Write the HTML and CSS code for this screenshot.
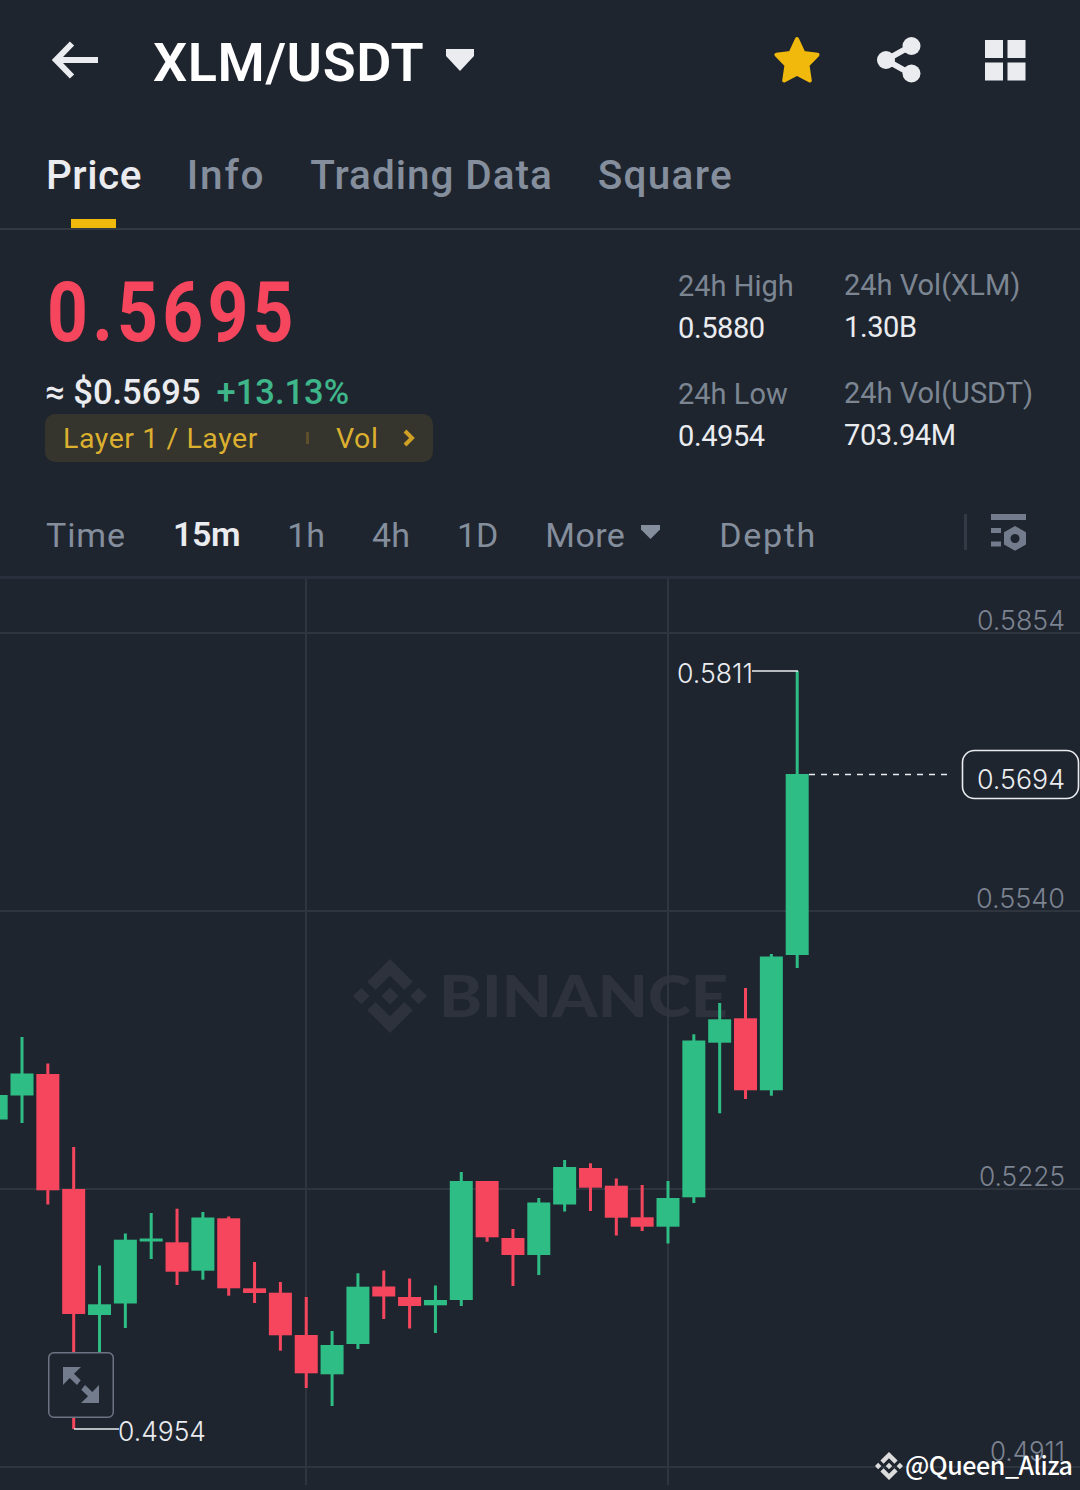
FILE: index.html
```html
<!DOCTYPE html>
<html lang="en">
<head>
    <meta charset="UTF-8">
    <title>XLM/USDT</title>
    <link rel="stylesheet" href="styles.css">
</head>
<body>
    <header class="topbar">
        <svg class="back" width="46" height="38" viewBox="0 0 46 38"><path d="M20 2.5 L4 19 L20 35.5 M5 19 H46" fill="none" stroke="#eaecef" stroke-width="6"/></svg>
        <h1 class="pair">XLM/USDT</h1>
        <svg class="pair-caret" width="28" height="22" viewBox="0 0 28 22"><path d="M0 0 H28 V7 L14 22 L0 7 Z"/></svg>
        <div class="actions">
            <svg class="star" width="46" height="48" viewBox="0 0 46 48"><path d="M23 3 L29.5 17 L43.5 18.8 L33.5 29 L35.8 44.5 L23 37.8 L10.2 44.5 L12.5 29 L2.5 18.8 L16.5 17 Z"/></svg>
            <svg class="share" width="44" height="48" viewBox="0 0 44 48"><path d="M34 10 L9 24 L34 38" fill="none" stroke="#eaecef" stroke-width="6"/><circle cx="9" cy="24" r="9"/><circle cx="34.5" cy="10" r="9"/><circle cx="34.5" cy="37.5" r="9"/></svg>
            <svg width="41" height="41" viewBox="0 0 41 41"><path d="M0 0h18v18H0z M22.5 0h18v18h-18z M0 22.5h18v18H0z M22.5 22.5h18v18h-18z"/></svg>
        </div>
    </header>

    <nav class="tabs">
        <span class="tab active">Price</span>
        <span class="tab info">Info</span>
        <span class="tab">Trading Data</span>
        <span class="tab square">Square</span>
    </nav>

    <section class="summary">
        <div class="quote">
            <div class="price"><span>0.5695</span></div>
            <div class="fiat"><span>≈ $0.5695</span><span class="up">+13.13%</span></div>
            <div class="tag">
                <span class="tag-name">Layer 1 / Layer</span>
                <i class="tag-line"></i>
                <span>Vol</span>
                <svg width="12" height="18" viewBox="0 0 12 18"><path d="M2 2 L9 9 L2 16" fill="none" stroke="#d1a126" stroke-width="4"/></svg>
            </div>
        </div>
        <div class="stats">
            <div class="label">24h High</div>
            <div class="value">0.5880</div>
            <div class="label low">24h Low</div>
            <div class="value">0.4954</div>
        </div>
        <div class="stats vol">
            <div class="label">24h Vol(XLM)</div>
            <div class="value">1.30B</div>
            <div class="label low">24h Vol(USDT)</div>
            <div class="value">703.94M</div>
        </div>
    </section>

    <nav class="intervals">
        <span class="time">Time</span>
        <span class="active">15m</span>
        <span>1h</span>
        <span>4h</span>
        <span>1D</span>
        <span class="more">More</span>
        <svg class="more-caret" width="19" height="14" viewBox="0 0 19 14"><path d="M0 0 H19 V4.5 L9.5 14 L0 4.5 Z"/></svg>
        <span class="depth">Depth</span>
        <i class="sep"></i>
        <svg class="settings" width="36" height="37" viewBox="0 0 36 37"><path d="M0 0h35v6H0z M0 14h10v5H0z M0 27.5h10v5H0z"/><path fill-rule="evenodd" d="M24 12 L35 18.2 V30.5 L24 36.7 L13 30.5 V18.2 Z M24 20 a4.5 4.5 0 1 0 .01 0 Z"/></svg>
    </nav>

    <svg class="chart" width="1080" height="911" viewBox="0 579 1080 911">
        <defs>
            <symbol id="logo" viewBox="0 0 126.61 126.61">
                <path d="M38.73 53.2 L63.3 28.63 L87.88 53.22 L102.18 38.92 L63.3 0 L24.43 38.9 Z M0 63.31 L14.3 49 L28.6 63.31 L14.3 77.61 Z M38.73 73.41 L63.3 98 L87.88 73.4 L102.18 87.68 L63.31 126.61 L24.42 87.71 Z M98 63.31 L112.3 49 L126.61 63.31 L112.3 77.61 Z M77.83 63.3 L63.3 48.78 L48.78 63.3 L63.3 77.83 Z"/>
            </symbol>
        </defs>
        <g class="watermark">
            <use href="#logo" x="353" y="959" width="74" height="74"/>
            <text x="439" y="1017" textLength="289" lengthAdjust="spacingAndGlyphs">BINANCE</text>
        </g>
        <path class="grid" d="M0 633H1080 M0 911H1080 M0 1189H1080 M0 1467H1080 M306 579V1485 M668 579V1485"/>
        <g class="axis">
            <text x="977" y="630" textLength="88" lengthAdjust="spacingAndGlyphs">0.5854</text>
            <text x="976" y="908" textLength="89" lengthAdjust="spacingAndGlyphs">0.5540</text>
            <text x="979" y="1186" textLength="86" lengthAdjust="spacingAndGlyphs">0.5225</text>
            <text x="990" y="1461" textLength="75" lengthAdjust="spacingAndGlyphs">0.4911</text>
        </g>
        <g id="candles"></g>
        <g class="marks">
            <path d="M752 671H798 M74 1429H119"/>
            <path d="M809 774.5H947" stroke-dasharray="6 6"/>
            <rect x="962.5" y="750.5" width="116" height="48" rx="12"/>
            <text x="677" y="683" textLength="76" lengthAdjust="spacingAndGlyphs">0.5811</text>
            <text x="977" y="789" textLength="88" lengthAdjust="spacingAndGlyphs">0.5694</text>
            <text x="118" y="1441" textLength="88" lengthAdjust="spacingAndGlyphs">0.4954</text>
        </g>
        <g class="expand">
            <rect x="48.75" y="1352.75" width="64.5" height="64.5" rx="5"/>
            <path d="M63 1367H81L74 1373.7L80.7 1380.3L77 1385L69.7 1378L63 1385Z M99 1403H81L88 1396.3L81.3 1389.7L85 1385L92.3 1392L99 1385Z"/>
        </g>
        <g class="author">
            <use href="#logo" x="875" y="1452" width="28" height="28"/>
            <text x="905" y="1475" textLength="168">@Queen_Aliza</text>
        </g>
    </svg>

    <script>
        // direction, high, body top, body bottom, low
        const candles = [
            ['up', 1095, 1095, 1119.5, 1119.5],
            ['up', 1037, 1073.5, 1095.5, 1123],
            ['down', 1063.5, 1074, 1190.3, 1204.5],
            ['down', 1147, 1189, 1314, 1429],
            ['up', 1265.5, 1304.3, 1315, 1370],
            ['up', 1233.5, 1239.7, 1303.5, 1328],
            ['up', 1213, 1238.5, 1241.5, 1259],
            ['down', 1208.7, 1242.3, 1271.7, 1285],
            ['up', 1212, 1217.5, 1270.7, 1279.7],
            ['down', 1216.5, 1218.3, 1288.3, 1295.7],
            ['down', 1262, 1288.3, 1293, 1303],
            ['down', 1282, 1292.7, 1335.3, 1350.7],
            ['down', 1297, 1335, 1373.3, 1388],
            ['up', 1331, 1345, 1374.3, 1406],
            ['up', 1273.3, 1286.7, 1344, 1349],
            ['down', 1270.5, 1286.5, 1296.5, 1319],
            ['down', 1278.5, 1297, 1306, 1328.5],
            ['up', 1285.5, 1300, 1305.3, 1333],
            ['up', 1172, 1181, 1300, 1306],
            ['down', 1181, 1181, 1237.3, 1241.7],
            ['down', 1229, 1238, 1255, 1286],
            ['up', 1198, 1202.5, 1255, 1275],
            ['up', 1160, 1167, 1204.5, 1211.5],
            ['down', 1163.3, 1168, 1187.7, 1211],
            ['down', 1178.5, 1185.7, 1217.7, 1235.5],
            ['down', 1185, 1217.3, 1226.7, 1231],
            ['up', 1181, 1198, 1226.7, 1243.5],
            ['up', 1034.3, 1040.5, 1197.3, 1203],
            ['up', 1003, 1019.3, 1042.7, 1113.3],
            ['down', 988, 1018.3, 1090.3, 1099],
            ['up', 954, 956.5, 1090.3, 1095.7],
            ['up', 671, 774, 955, 968]
        ];
        const step = 25.84;
        let out = '';
        candles.forEach(([dir, high, top, bottom, low], i) => {
            const x = 22 + (i - 1) * step;
            out += `<g class="${dir}"><rect x="${x - 1.5}" y="${high}" width="3" height="${low - high}"/>`;
            out += `<rect x="${x - 11.5}" y="${top}" width="23" height="${bottom - top}"/></g>`;
        });
        document.getElementById('candles').innerHTML = out;
    </script>
</body>
</html>
```
FILE: styles.css
```css
* { box-sizing: border-box; }
body { margin: 0; width: 1080px; height: 1490px; overflow: hidden; background: #1f252f; color: #eaecef; font-family: Roboto, "Liberation Sans", sans-serif; }
svg { display: block; flex: none; fill: #eaecef; }
span, .label, .value { white-space: nowrap; }

.topbar { display: flex; align-items: center; height: 120px; padding: 0 54px 0 52px; }
.pair { margin: 5px 22px 0 55px; font-size: 54px; font-weight: 600; letter-spacing: .6px; color: #fff; }
.actions { display: flex; align-items: center; margin-left: auto; }
.star { margin-right: 57px; fill: #f0b90b; stroke: #f0b90b; stroke-width: 4; stroke-linejoin: round; }
.share { margin-right: 64px; }

.tabs { display: flex; gap: 45px; height: 110px; padding: 3px 46px 0; border-bottom: 2px solid #323943; }
.tab { position: relative; font-size: 40.5px; line-height: 105px; font-weight: 500; letter-spacing: .95px; color: #848e9c; }
.tab.active { color: #eaecef; letter-spacing: .5px; }
.tab.active::after { content: ""; position: absolute; left: 50%; bottom: 0; width: 45px; height: 9px; margin-left: -23px; background: #f0b90b; }
.tab.info { letter-spacing: 1.8px; }
.tab.square { letter-spacing: 1.3px; }

.summary { display: flex; height: 260px; padding: 35px 0 0 45px; }
.quote { width: 633px; }
.price { padding-left: 2px; font-size: 83px; line-height: 96px; font-weight: 700; color: #f6465d; }
.price span { display: inline-block; letter-spacing: 4.9px; transform: scaleX(.86); transform-origin: left; }
.fiat { display: flex; gap: 16px; margin-top: 9px; font-size: 34.5px; line-height: 44px; font-weight: 500; }
.up { color: #3eb68a; }
.tag { display: flex; align-items: center; width: 388px; height: 48px; padding: 0 18px; border-radius: 10px; background: #35342d; color: #dcb02f; font-size: 28.5px; letter-spacing: .57px; }
.tag-name { width: 243px; }
.tag-line { width: 3px; height: 12px; margin-right: 27px; background: #5e4f2c; }
.tag svg { margin-left: auto; }
.stats { width: 166px; font-size: 29px; line-height: 42px; }
.stats.vol { width: auto; margin-top: -1px; }
.label { color: #7c8592; }
.value { font-weight: 450; letter-spacing: -.4px; }
.low { margin-top: 24px; }

.intervals { display: flex; align-items: center; gap: 47px; height: 89px; padding: 4px 53px 0 46px; border-bottom: 3px solid #29303b; font-size: 34px; color: #848e9c; }
.intervals .active { margin-top: -2px; color: #eaecef; font-weight: 600; letter-spacing: -.4px; }
.time { letter-spacing: .9px; }
.more { letter-spacing: .4px; }
.more-caret { margin: -6px 12px 0 -31px; fill: #848e9c; }
.depth { letter-spacing: 1.7px; }
.sep { width: 3px; height: 36px; margin: -7px -23px 0 auto; background: #333a45; }
.settings { margin-top: -6px; fill: #737c8d; }

.chart text { font-family: Inter, "Liberation Sans", sans-serif; font-size: 26.5px; font-weight: 300; }
.chart .grid { fill: none; stroke: #2f353f; stroke-width: 2; }
.chart .axis { fill: #7c8391; }
.chart .up { fill: #2ebd85; }
.chart .down { fill: #f6465d; }
.marks path, .marks rect { fill: none; stroke: #eaecef; stroke-width: 1.6; }
.expand { fill: #737c8d; }
.expand rect { fill: #1f252f; stroke: #6c7483; stroke-width: 1.5; }
.watermark { fill: #2e323d; }
.chart .watermark text { font-family: Lato, sans-serif; font-size: 57px; font-weight: 900; }
.author { fill: #dcdcdc; }
.chart .author text { font-family: "Noto Sans CJK SC", "Noto Sans", sans-serif; font-size: 25px; font-weight: 500; fill: #fff; }
```
